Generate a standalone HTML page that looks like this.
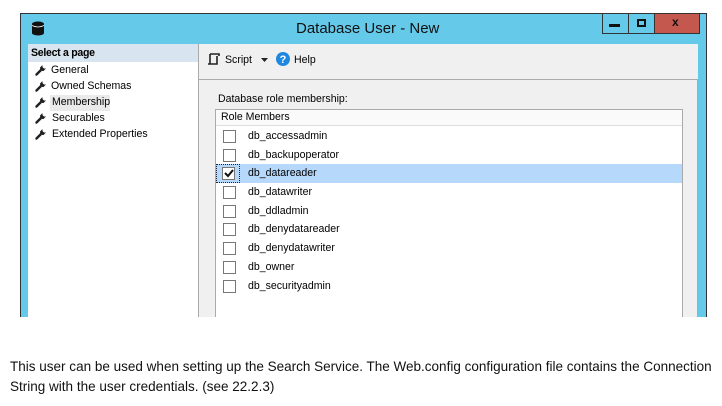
<!DOCTYPE html>
<html><head><meta charset="utf-8"><style>
*{margin:0;padding:0;box-sizing:border-box}
body{width:722px;height:406px;background:#fff;position:relative;overflow:hidden;font-family:"Liberation Sans",sans-serif}
.a{position:absolute}
.win{left:20px;top:13px;width:687px;height:304px;background:#65c9ea;border:1px solid #333;border-bottom:none}
.t{font-size:11px;color:#000;white-space:nowrap;transform-origin:0 0;transform:scaleX(0.96)}
.row{position:absolute;left:221px;height:19px;width:461px}
.cb{position:absolute;left:2px;top:3px;width:13px;height:13px;border:1px solid #777;background:#fff}
.rl{position:absolute;left:27px;top:3px;font-size:11px;transform-origin:0 0;transform:scaleX(0.96)}
.w{position:absolute;left:35px;width:12px;height:12px}
.p{font-size:14px;color:#111;white-space:nowrap;transform-origin:0 0;transform:scaleX(0.965)}
</style></head><body>
<div class="a win"></div>
<svg class="a" style="left:31px;top:21px" width="14" height="15"><ellipse cx="7" cy="3" rx="6" ry="2.5" fill="#111"/><rect x="1" y="3" width="12" height="9" fill="#111"/><ellipse cx="7" cy="12" rx="6" ry="2.5" fill="#111"/><path d="M1 4.5 Q7 7.5 13 4.5" stroke="#fff" fill="none" stroke-width="0.8"/></svg>
<div class="a" style="left:296px;top:20px;font-size:15px;color:#111">Database User - New</div>
<div class="a" style="left:602px;top:13px;width:27px;height:21px;border:1px solid #333;background:#65c9ea"></div>
<div class="a" style="left:609px;top:24px;width:11px;height:3px;background:#111"></div>
<div class="a" style="left:628px;top:13px;width:27px;height:21px;border:1px solid #333;background:#65c9ea"></div>
<div class="a" style="left:637px;top:19px;width:9px;height:8px;border:2px solid #111"></div>
<div class="a" style="left:654px;top:13px;width:46px;height:21px;border:1px solid #333;background:#c4584e"></div>
<div class="a" style="left:672px;top:15px;font-size:12px;font-weight:bold;color:#111">x</div>
<div class="a" style="left:28px;top:44px;width:171px;height:273px;background:#fff"></div>
<div class="a" style="left:28px;top:44px;width:171px;height:18px;background:#d8e4ef"></div>
<div class="a t" style="left:31px;top:47px;font-weight:bold;letter-spacing:-0.3px">Select a page</div>
<div class="a" style="left:50px;top:95px;width:60px;height:16px;background:#eaeaea"></div>
<svg width="0" height="0" style="position:absolute"><defs><symbol id="wr" viewBox="0 0 12 12"><path d="M1.5 10.5 L6 6" stroke="#222" stroke-width="2.4" stroke-linecap="round"/><path d="M5 3.5 A3.2 3.2 0 0 0 8.5 7 L11 4.5 L9 4.5 L7.5 3 L7.5 1 Z" fill="#222"/></symbol></defs></svg>
<svg class="w" style="top:64px"><use href="#wr"/></svg>
<svg class="w" style="top:80px"><use href="#wr"/></svg>
<svg class="w" style="top:96px"><use href="#wr"/></svg>
<svg class="w" style="top:112px"><use href="#wr"/></svg>
<svg class="w" style="top:128px"><use href="#wr"/></svg>
<div class="a t" style="left:51px;top:64px">General</div>
<div class="a t" style="left:51px;top:80px">Owned Schemas</div>
<div class="a t" style="left:52px;top:96px">Membership</div>
<div class="a t" style="left:52px;top:112px">Securables</div>
<div class="a t" style="left:52px;top:128px">Extended Properties</div>
<div class="a" style="left:198px;top:44px;width:1px;height:273px;background:#aaa"></div>
<div class="a" style="left:199px;top:44px;width:499px;height:273px;background:#f0f0f0"></div>
<div class="a" style="left:199px;top:79px;width:498px;height:1px;background:#aaa"></div>
<div class="a" style="left:697px;top:79px;width:1px;height:238px;background:#aaa"></div>
<svg class="a" style="left:207px;top:53px" width="14" height="13"><path d="M3 1 H12 V3 M3 1 V11 H1 M3 11 H10 V3" stroke="#222" stroke-width="1.6" fill="none"/></svg>
<div class="a t" style="left:225px;top:54px">Script</div>
<svg class="a" style="left:261px;top:58px" width="7" height="4"><path d="M0 0 H7 L3.5 4 Z" fill="#222"/></svg>
<svg class="a" style="left:276px;top:52px" width="14" height="14"><circle cx="7" cy="7" r="7" fill="#1e88e0"/><text x="7" y="11" font-size="11" font-weight="bold" fill="#fff" text-anchor="middle" font-family="Liberation Sans">?</text></svg>
<div class="a t" style="left:294px;top:54px">Help</div>
<div class="a t" style="left:218px;top:93px">Database role membership:</div>
<div class="a" style="left:215px;top:109px;width:468px;height:208px;background:#fff;border:1px solid #aaa;border-bottom:none"></div>
<div class="a" style="left:216px;top:110px;width:466px;height:16px;background:#fafafa;border-bottom:1px solid #ddd"></div>
<div class="a t" style="left:221px;top:111px">Role Members</div>
<div class="row" style="top:127px"><div class="cb"></div><div class="rl">db_accessadmin</div></div>
<div class="row" style="top:146px"><div class="cb"></div><div class="rl">db_backupoperator</div></div>
<div class="row" style="top:164px;left:216px;width:466px;background:#b6d9fb"><div style="position:absolute;left:0;top:0;width:24px;height:19px;border:1px dotted #222"></div><div class="cb" style="left:6px"></div><svg style="position:absolute;left:8px;top:5px" width="10" height="9"><path d="M1 4 L4 7 L9 1" stroke="#111" stroke-width="2" fill="none"/></svg><div class="rl" style="left:32px">db_datareader</div></div>
<div class="row" style="top:183px"><div class="cb"></div><div class="rl">db_datawriter</div></div>
<div class="row" style="top:202px"><div class="cb"></div><div class="rl">db_ddladmin</div></div>
<div class="row" style="top:220px"><div class="cb"></div><div class="rl">db_denydatareader</div></div>
<div class="row" style="top:239px"><div class="cb"></div><div class="rl">db_denydatawriter</div></div>
<div class="row" style="top:258px"><div class="cb"></div><div class="rl">db_owner</div></div>
<div class="row" style="top:277px"><div class="cb"></div><div class="rl">db_securityadmin</div></div>
<div class="a p" style="left:10px;top:358px">This user can be used when setting up the Search Service. The Web.config configuration file contains the Connection</div>
<div class="a p" style="left:10px;top:378px">String with the user credentials. (see 22.2.3)</div>
</body></html>
